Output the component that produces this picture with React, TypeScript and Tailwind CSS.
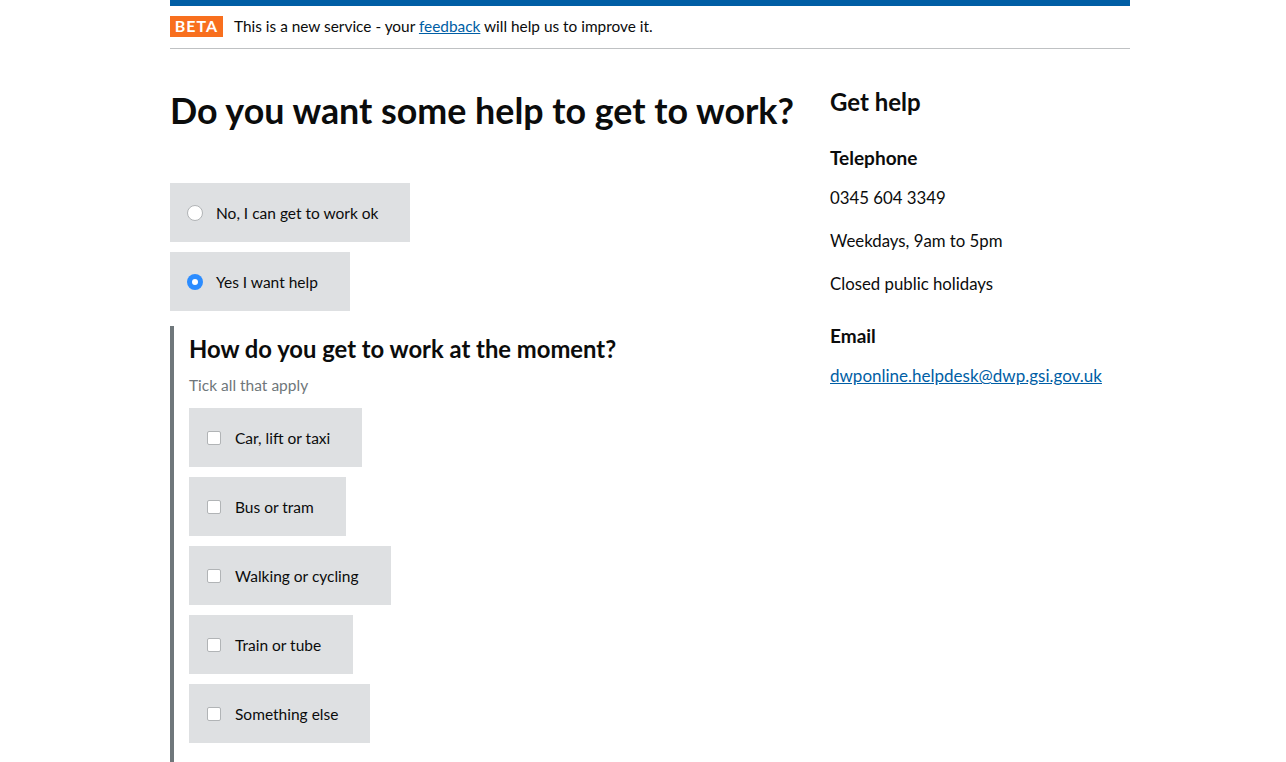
import React from "react";

const font = { fontFamily: 'Lato, "Noto Sans", Arial, sans-serif' };

function Radio({ label, checked }: { label: string; checked?: boolean }) {
  return (
    <div className="flex h-[59px] w-fit items-center bg-[#dee0e2] pl-[17px] pr-[32px]">
      {checked ? (
        <span className="flex h-[16px] w-[16px] items-center justify-center rounded-full bg-[#2b8cff]">
          <span className="h-[6px] w-[6px] rounded-full bg-white" />
        </span>
      ) : (
        <span className="h-[16px] w-[16px] rounded-full border border-[#b1b4b6] bg-white" />
      )}
      <span className="ml-[13px] text-[15.5px] leading-[20px] text-[#0b0c0c]">{label}</span>
    </div>
  );
}

function Check({ label }: { label: string }) {
  return (
    <div className="flex h-[59px] w-fit items-center bg-[#dee0e2] pl-[18px] pr-[32px]">
      <span className="h-[14px] w-[14px] rounded-[2px] border border-[#b1b4b6] bg-white" />
      <span className="ml-[14px] text-[15.5px] leading-[20px] text-[#0b0c0c]">{label}</span>
    </div>
  );
}

export default function App() {
  return (
    <div className="h-[762px] overflow-hidden bg-white text-[#0b0c0c]" style={font}>
      <div className="ml-[170px] w-[960px]">
        <div className="h-[6px] bg-[#005ea5]" />
        <div className="flex h-[43px] items-center border-b border-[#bfc1c3] pb-[2px]">
          <span className="flex h-[21px] w-[53px] items-center justify-center bg-[#f86f1e] text-[16px] font-bold tracking-[1px] text-white">
            BETA
          </span>
          <span className="ml-[11px] text-[15.4px] leading-[20px]">
            This is a new service - your{" "}
            <a href="#" className="text-[#005ea5] underline">feedback</a> will help us to improve it.
          </span>
        </div>
        <div className="flex">
          <div className="w-[660px]">
            <h1 className="mt-[40px] text-[35.8px] font-bold leading-[44px]">Do you want some help to get to work?</h1>
            <div className="mt-[50px] flex flex-col gap-[10px]">
              <Radio label="No, I can get to work ok" />
              <Radio label="Yes I want help" checked />
            </div>
            <div className="mt-[15px] border-l-[4px] border-[#6f777b] pb-[20px] pl-[15px] pt-[7px]">
              <h2 className="text-[23.8px] font-bold leading-[32px]">How do you get to work at the moment?</h2>
              <p className="mt-[10px] text-[15.5px] leading-[20px] text-[#6f777b]">Tick all that apply</p>
              <div className="mt-[13px] flex flex-col gap-[10px]">
                <Check label="Car, lift or taxi" />
                <Check label="Bus or tram" />
                <Check label="Walking or cycling" />
                <Check label="Train or tube" />
                <Check label="Something else" />
              </div>
            </div>
          </div>
          <div className="w-[300px]">
            <h2 className="mt-[37px] text-[24px] font-bold leading-[32px]">Get help</h2>
            <h3 className="mt-[28px] text-[19px] font-bold leading-[24px]">Telephone</h3>
            <p className="mt-[16px] text-[16.8px] leading-[24px]">0345 604 3349</p>
            <p className="mt-[19px] text-[16.8px] leading-[24px]">Weekdays, 9am to 5pm</p>
            <p className="mt-[19px] text-[16.8px] leading-[24px]">Closed public holidays</p>
            <h3 className="mt-[28px] text-[19px] font-bold leading-[24px]">Email</h3>
            <p className="mt-[16px] text-[17px] leading-[24px]">
              <a href="#" className="text-[#005ea5] underline">dwponline.helpdesk@dwp.gsi.gov.uk</a>
            </p>
          </div>
        </div>
      </div>
    </div>
  );
}
